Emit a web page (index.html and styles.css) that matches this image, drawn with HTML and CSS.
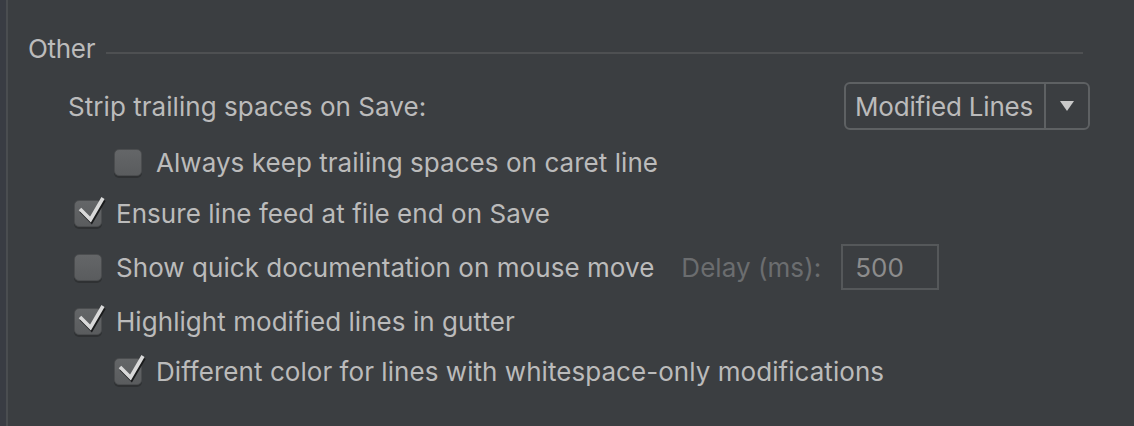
FILE: index.html
```html
<!DOCTYPE html>
<html>
<head>
<meta charset="utf-8">
<link rel="stylesheet" href="styles.css">
</head>
<body>
<div class="frame">
  <div class="edge"></div>
  <div class="panel">
    <div class="group-title">
      <span class="title-text">Other</span>
      <span class="title-line"></span>
    </div>

    <div class="row row-strip">
      <span class="label">Strip trailing spaces on Save:</span>
      <div class="combo">
        <span class="combo-value">Modified Lines</span>
        <span class="combo-arrow">
          <svg width="14" height="10" viewBox="0 0 14 10"><path d="M0 0 H14 L7 10 Z" fill="#c9c9c9"/></svg>
        </span>
      </div>
    </div>

    <div class="row option level2 row-keep">
      <span class="checkbox"></span>
      <span class="label">Always keep trailing spaces on caret line</span>
    </div>

    <div class="row option level1 row-ensure">
      <span class="checkbox checked">
        <svg class="check" width="30" height="28" viewBox="0 0 30 28"><path d="M6 11 L16.5 21.5 L29 0" fill="none" stroke="#1a1b1c" stroke-width="3.8" stroke-linejoin="miter" transform="translate(1 2)"/><path d="M6 11 L16.5 21.5 L29 0" fill="none" stroke="#d9d9d9" stroke-width="3.6" stroke-linejoin="miter"/></svg>
      </span>
      <span class="label">Ensure line feed at file end on Save</span>
    </div>

    <div class="row option level1 row-quick">
      <span class="checkbox"></span>
      <span class="label">Show quick documentation on mouse move</span>
      <span class="label disabled delay">Delay (ms):</span>
      <div class="field">500</div>
    </div>

    <div class="row option level1 row-highlight">
      <span class="checkbox checked">
        <svg class="check" width="30" height="28" viewBox="0 0 30 28"><path d="M6 11 L16.5 21.5 L29 0" fill="none" stroke="#1a1b1c" stroke-width="3.8" stroke-linejoin="miter" transform="translate(1 2)"/><path d="M6 11 L16.5 21.5 L29 0" fill="none" stroke="#d9d9d9" stroke-width="3.6" stroke-linejoin="miter"/></svg>
      </span>
      <span class="label">Highlight modified lines in gutter</span>
    </div>

    <div class="row option level2 row-different">
      <span class="checkbox checked">
        <svg class="check" width="30" height="28" viewBox="0 0 30 28"><path d="M6 11 L16.5 21.5 L29 0" fill="none" stroke="#1a1b1c" stroke-width="3.8" stroke-linejoin="miter" transform="translate(1 2)"/><path d="M6 11 L16.5 21.5 L29 0" fill="none" stroke="#d9d9d9" stroke-width="3.6" stroke-linejoin="miter"/></svg>
      </span>
      <span class="label">Different color for lines with whitespace-only modifications</span>
    </div>
  </div>
</div>
</body>
</html>
```

FILE: styles.css
```css
html, body {
  margin: 0;
  padding: 0;
  background: #3b3e41;
}

body {
  width: 1134px;
  height: 426px;
  overflow: hidden;
  font-family: "Inter", "Liberation Sans", sans-serif;
  font-size: 26px;
  color: #bbbbbb;
}

.frame {
  display: flex;
  height: 426px;
}

.edge {
  width: 6px;
  background: #393c43;
  border-right: 2px solid #4a4d50;
  flex: none;
}

.panel {
  flex: 1;
  display: flex;
  flex-direction: column;
  padding: 28px 44px 0 20px;
}

.group-title {
  height: 40px;
  display: flex;
  align-items: center;
  padding-right: 7px;
}

.title-text {
  flex: none;
  letter-spacing: -0.3px;
}

.title-line {
  flex: 1;
  height: 2px;
  background: #4e5052;
  margin-left: 11px;
  margin-top: 10px;
}

.row {
  display: flex;
  align-items: center;
  height: 40px;
}

.row-strip {
  height: 48px;
  margin-top: 14px;
  padding-left: 40px;
  justify-content: space-between;
}

.row-keep { margin-top: 12px; }
.row-ensure { margin-top: 11px; }
.row-quick { margin-top: 11px; height: 46px; }
.row-highlight { margin-top: 11px; }
.row-different { margin-top: 10px; }

.option.level1 { padding-left: 46px; }
.option.level2 { padding-left: 86px; }

.label {
  white-space: nowrap;
  letter-spacing: 0.05px;
}

.checkbox {
  position: relative;
  flex: none;
  width: 28px;
  height: 27px;
  box-sizing: border-box;
  border: 1px solid #4b4d4f;
  border-radius: 5px;
  background: linear-gradient(#646668, #5a5c5e);
  box-shadow: 0 2px 0 #2f3133;
  margin-right: 14px;
}

.check {
  position: absolute;
  left: -1px;
  top: -3px;
  overflow: visible;
}

.combo {
  display: flex;
  align-items: stretch;
  width: 246px;
  height: 48px;
  box-sizing: border-box;
  border: 2px solid #5e6163;
  border-radius: 6px;
}

.combo-value {
  flex: 1;
  display: flex;
  align-items: center;
  padding-left: 9px;
  letter-spacing: -0.2px;
}

.combo-arrow {
  width: 42px;
  border-left: 2px solid #5e6163;
  display: flex;
  align-items: center;
  justify-content: center;
}

.disabled {
  color: #6b6d6f;
}

.delay {
  margin-left: 27px;
}

.field {
  width: 98px;
  height: 46px;
  box-sizing: border-box;
  border: 2px solid #55585a;
  margin-left: 20px;
  display: flex;
  align-items: center;
  padding-left: 12px;
  color: #8c8c8c;
}
```
